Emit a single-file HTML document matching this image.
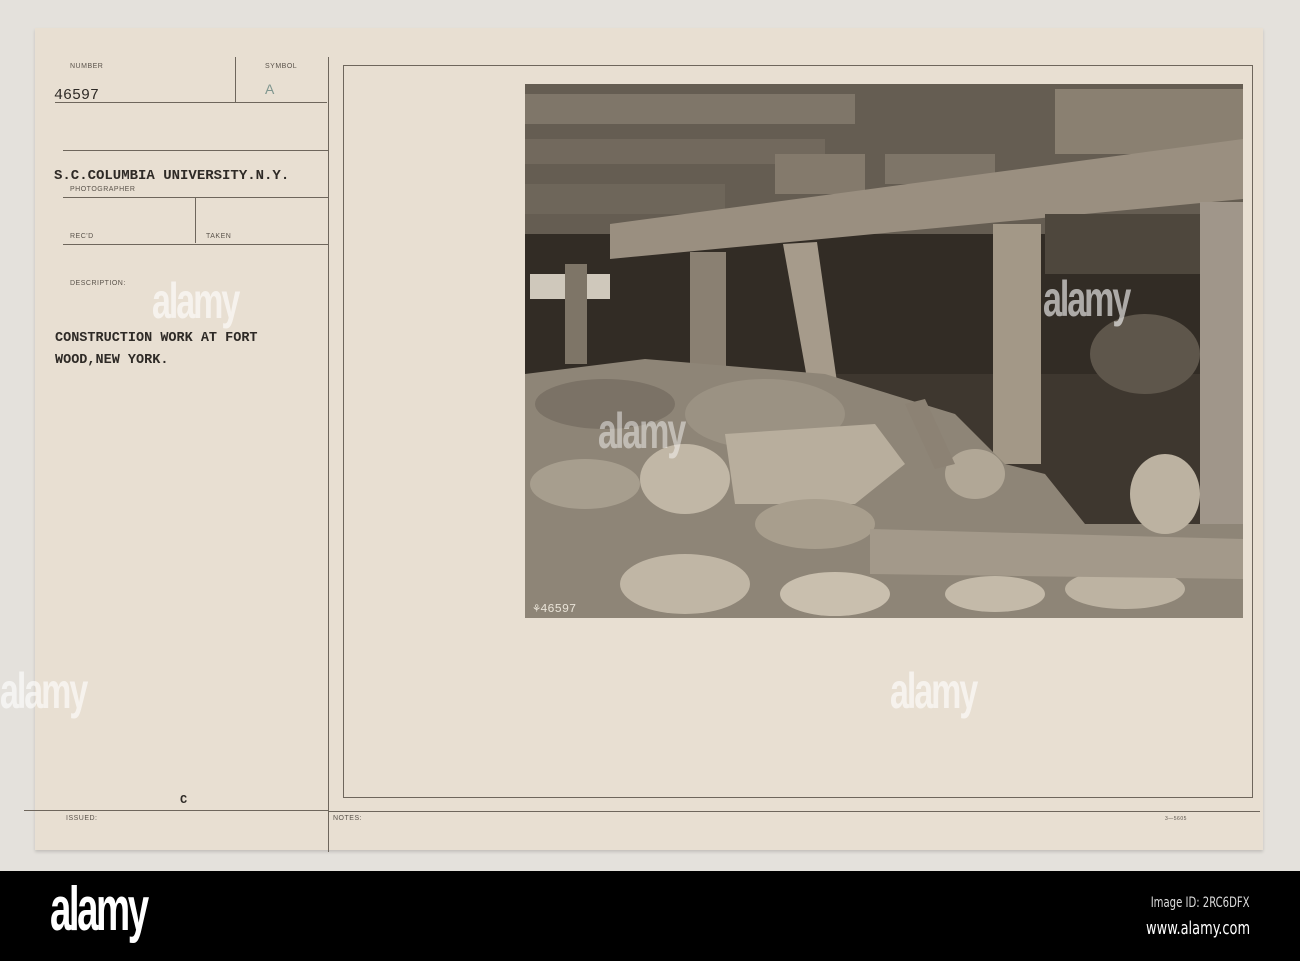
<!DOCTYPE html>
<html><head><meta charset="utf-8"><style>
*{margin:0;padding:0;box-sizing:border-box}
body{width:1300px;height:961px;overflow:hidden;background:#e4e1dc;position:relative;font-family:"Liberation Mono",monospace}
.card{position:absolute;left:35px;top:28px;width:1228px;height:822px;background:#e8dfd2;box-shadow:0 2px 3px rgba(0,0,0,.15)}
.a{position:absolute}
.h{position:absolute;height:1px;background:#6e665c}
.v{position:absolute;width:1px;background:#6e665c}
.lbl{position:absolute;font-family:"Liberation Sans",sans-serif;font-size:7px;color:#5a534b;letter-spacing:.5px}
.tw{position:absolute;font-family:"Liberation Mono",monospace;font-weight:bold;color:#2e2a26;font-size:14px;white-space:nowrap}
.wm{position:absolute;font-family:"Liberation Sans",sans-serif;font-weight:bold;color:rgba(255,255,255,.6);font-size:50px;letter-spacing:-3px;transform:scaleX(.68);transform-origin:left top}
.band{position:absolute;left:0;top:871px;width:1300px;height:90px;background:#000}
</style></head><body>
<div class="card"></div>
<div class="lbl" style="left:70px;top:63px">NUMBER</div>
<div class="tw" style="left:54px;top:87px;font-weight:normal;font-size:15px">46597</div>
<div class="h" style="left:55px;top:102px;width:272px"></div>
<div class="v" style="left:235px;top:57px;height:45px"></div>
<div class="lbl" style="left:265px;top:63px">SYMBOL</div>
<div class="a" style="left:265px;top:81px;font-family:'Liberation Sans',sans-serif;font-size:14px;color:#7f968f">A</div>
<div class="h" style="left:63px;top:150px;width:265px"></div>
<div class="tw" style="left:54px;top:168px">S.C.COLUMBIA UNIVERSITY.N.Y.</div>
<div class="lbl" style="left:70px;top:186px">PHOTOGRAPHER</div>
<div class="h" style="left:63px;top:197px;width:265px"></div>
<div class="v" style="left:195px;top:197px;height:46px"></div>
<div class="lbl" style="left:70px;top:233px">REC'D</div>
<div class="lbl" style="left:206px;top:233px">TAKEN</div>
<div class="h" style="left:63px;top:244px;width:265px"></div>
<div class="lbl" style="left:70px;top:280px">DESCRIPTION:</div>
<div class="tw" style="left:55px;top:331px;font-size:13.5px">CONSTRUCTION WORK AT FORT</div>
<div class="tw" style="left:55px;top:353px;font-size:13.5px">WOOD,NEW YORK.</div>
<div class="v" style="left:328px;top:57px;height:795px"></div>
<div class="a" style="left:343px;top:65px;width:910px;height:733px;border:1px solid #6e665c"></div>
<div class="tw" style="left:180px;top:793px;font-size:12px">C</div>
<div class="h" style="left:24px;top:810px;width:304px"></div>
<div class="h" style="left:328px;top:811px;width:932px"></div>
<div class="lbl" style="left:66px;top:815px">ISSUED:</div>
<div class="lbl" style="left:333px;top:815px">NOTES:</div>
<div class="lbl" style="left:1165px;top:816px;font-size:5px">3—5605</div>

<svg class="a" style="left:525px;top:84px" width="718" height="534" viewBox="0 0 718 534">
<rect width="718" height="534" fill="#3e372f"/>
<rect width="718" height="150" fill="#655d52"/>
<rect x="0" y="10" width="330" height="30" fill="#7f7669"/>
<rect x="0" y="55" width="300" height="25" fill="#72695d"/>
<rect x="0" y="100" width="200" height="30" fill="#6e665a"/>
<rect x="250" y="70" width="90" height="40" fill="#847a6c"/>
<rect x="360" y="70" width="110" height="30" fill="#7e7568"/>
<rect x="530" y="5" width="188" height="65" fill="#8a8071"/>
<rect x="0" y="150" width="718" height="140" fill="#322c25"/>
<rect x="5" y="190" width="80" height="25" fill="#cfc8bb"/>
<polygon points="85,140 718,55 718,115 85,175" fill="#9a8f80"/>
<rect x="40" y="180" width="22" height="100" fill="#7e7567"/>
<rect x="165" y="168" width="36" height="120" fill="#8a8072"/>
<polygon points="258,160 292,158 312,298 283,300" fill="#a69b8b"/>
<rect x="468" y="140" width="48" height="240" fill="#a39887"/>
<rect x="675" y="118" width="43" height="330" fill="#a0968a"/>
<rect x="520" y="130" width="155" height="60" fill="#4e473d"/>
<ellipse cx="620" cy="270" rx="55" ry="40" fill="#5e564b"/>
<polygon points="0,290 120,275 300,290 430,330 480,380 520,390 560,440 718,440 718,534 0,534" fill="#8e8577"/>
<ellipse cx="80" cy="320" rx="70" ry="25" fill="#7b7266"/>
<ellipse cx="240" cy="330" rx="80" ry="35" fill="#9b9283"/>
<polygon points="200,350 350,340 380,380 330,420 210,420" fill="#b8ae9d"/>
<ellipse cx="160" cy="395" rx="45" ry="35" fill="#c1b7a6"/>
<ellipse cx="60" cy="400" rx="55" ry="25" fill="#a79e8e"/>
<ellipse cx="290" cy="440" rx="60" ry="25" fill="#a89e8d"/>
<ellipse cx="160" cy="500" rx="65" ry="30" fill="#c0b6a5"/>
<ellipse cx="310" cy="510" rx="55" ry="22" fill="#c9bfae"/>
<ellipse cx="470" cy="510" rx="50" ry="18" fill="#c4baa9"/>
<ellipse cx="600" cy="505" rx="60" ry="20" fill="#bdb3a2"/>
<ellipse cx="450" cy="390" rx="30" ry="25" fill="#b1a796"/>
<polygon points="345,445 718,455 718,495 345,490" fill="#a3998a"/>
<ellipse cx="640" cy="410" rx="35" ry="40" fill="#bcb2a1"/>
<polygon points="380,320 400,315 430,380 410,385" fill="#8c8274"/>
<text x="8" y="528" font-family="Liberation Mono,monospace" font-size="12" fill="#e8e2d6">⚘46597</text>
</svg>

<div class="wm" style="left:152px;top:272px">alamy</div>
<div class="wm" style="left:0px;top:662px">alamy</div>
<div class="wm" style="left:890px;top:662px">alamy</div>
<div class="wm" style="left:1043px;top:270px">alamy</div>
<div class="wm" style="left:598px;top:402px;color:rgba(255,255,255,.45)">alamy</div>

<div class="band"></div>
<div class="a" style="left:50px;top:874px;font-family:'Liberation Sans',sans-serif;font-weight:bold;font-size:62px;color:#fff;letter-spacing:-4px;transform:scaleX(.62);transform-origin:left top">alamy</div>
<div class="a" style="right:50px;top:895px;font-family:'DejaVu Sans Condensed','DejaVu Sans',sans-serif;font-size:14px;color:#ddd;transform:scaleX(.8);transform-origin:right top">Image ID: 2RC6DFX</div>
<div class="a" style="right:50px;top:918px;font-family:'DejaVu Sans Condensed','DejaVu Sans',sans-serif;font-size:18px;color:#fff;transform:scaleX(.8);transform-origin:right top">www.alamy.com</div>
</body></html>
